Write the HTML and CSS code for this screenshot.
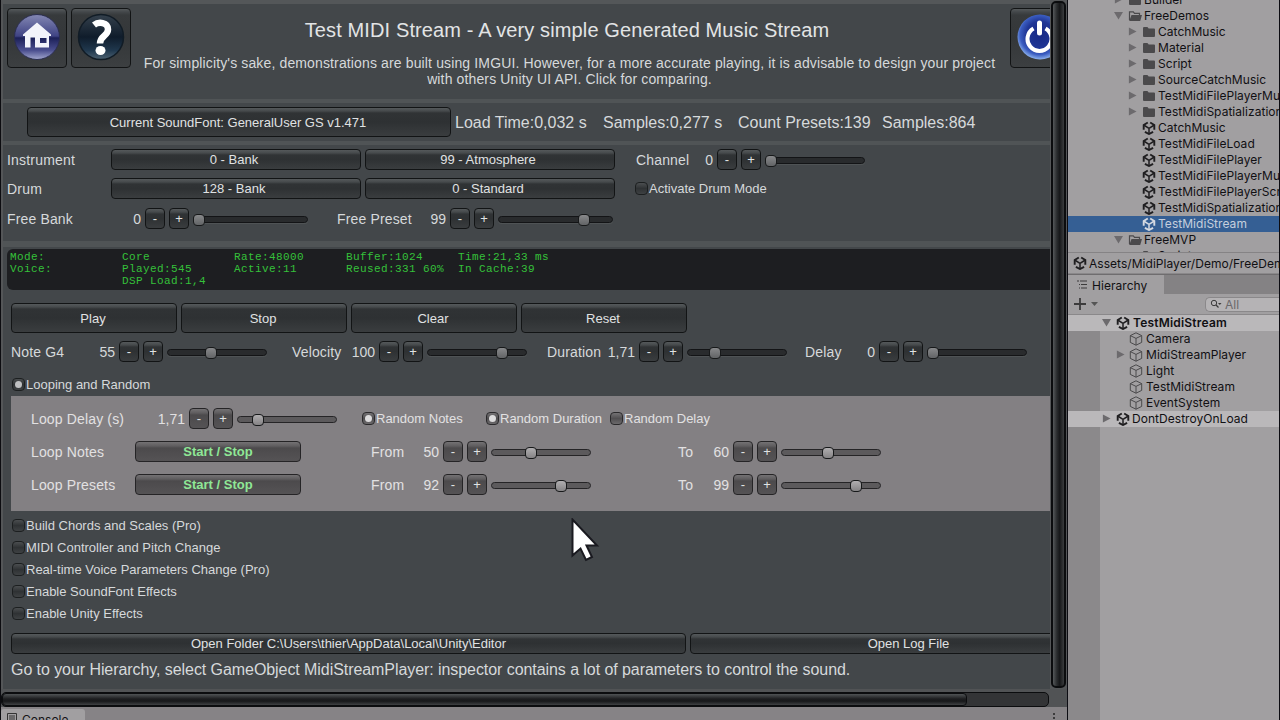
FILE: index.html
```html
<!DOCTYPE html>
<html lang="en">
<head>
  <meta charset="UTF-8">
  <meta name="viewport" content="width=device-width, initial-scale=1.0">
  <title>Test MIDI Stream</title>
  <link rel="stylesheet" href="styles.css">
</head>
<body>
  <svg class="defs">
    <symbol id="unity" viewBox="0 0 14 14">
      <path d="M5.800 1.500 1.700 4v4.700M8.200 1.500 12.300 4v4.700M2.900 10.800 7 13l4.100-2.200" fill="none" stroke="currentColor" stroke-width="1.900"/>
      <path d="M7 7.300V13M7 7.300 1.700 4M7 7.300 12.300 4" fill="none" stroke="currentColor" stroke-width="1.500"/>
    </symbol>
    <symbol id="folder" viewBox="0 0 14 12">
      <path d="M1 2.200Q1 1 2 1h3.400l1.300 1.500H12q1 0 1 1V10q0 1-1 1H2q-1 0-1-1z" fill="currentColor"/>
    </symbol>
    <symbol id="folder-open" viewBox="0 0 14 12">
      <path d="M1.500 10V1.800h3.800l1.200 1.500h5V5" fill="none" stroke="currentColor" stroke-width="1.200"/>
      <path d="M3.500 5H14l-1.800 6H1.200z" fill="currentColor"/>
    </symbol>
    <symbol id="cube" viewBox="0 0 14 14">
      <path d="M7 .8 12.700 3.600v6.800L7 13.200 1.300 10.400V3.600zM1.300 3.600 7 6.400l5.700-2.800M7 6.400v6.800" fill="none" stroke="currentColor" stroke-width="1"/>
    </symbol>
  </svg>

  <div class="editor">
    <div class="game">
      <div class="game-row">
        <div class="viewport">
          <header class="section header">
            <button class="btn icon-btn">
              <svg viewBox="0 0 48 48">
                <defs>
                  <linearGradient id="homeBg" x1="0" y1="0" x2="0" y2="1">
                    <stop offset="0" stop-color="#8488b4"/>
                    <stop offset=".48" stop-color="#3f4384"/>
                    <stop offset=".52" stop-color="#1c2058"/>
                    <stop offset=".8" stop-color="#4c5090"/>
                    <stop offset="1" stop-color="#a3a8cf"/>
                  </linearGradient>
                </defs>
                <circle cx="24" cy="24" r="22.5" fill="url(#homeBg)" stroke="#2b2e50"/>
                <path d="M24 9.500 38 21.500v1.500h-2v11.500H12V23h-2v-1.500zM17.500 24.500v10h4.500v-10zM27 25v5h6.500v-5z" fill="#f2f3fa" fill-rule="evenodd"/>
              </svg>
            </button>
            <button class="btn icon-btn">
              <svg viewBox="0 0 48 48">
                <defs>
                  <linearGradient id="helpBg" x1="0" y1="0" x2="0" y2="1">
                    <stop offset="0" stop-color="#35414d"/>
                    <stop offset=".5" stop-color="#0f1c2b"/>
                    <stop offset=".8" stop-color="#20384e"/>
                    <stop offset="1" stop-color="#4d6272"/>
                  </linearGradient>
                </defs>
                <circle cx="24" cy="24" r="22.500" fill="url(#helpBg)" stroke="#111c26" stroke-width="1.5"/>
                <path d="M17 12C21.500 8.500 31 9 31 16.500c0 6.500-8 6-8 14" fill="none" stroke="#fff" stroke-width="6.500"/>
                <ellipse cx="23.500" cy="37.500" rx="5" ry="4.500" fill="#fff"/>
              </svg>
            </button>
            <div class="title-box">
              <h1>Test MIDI Stream - A very simple Generated Music Stream</h1>
              <p>For simplicity's sake, demonstrations are built using IMGUI. However, for a more accurate playing, it is advisable to design your project<br>with others Unity UI API. Click for comparing.</p>
            </div>
            <button class="btn icon-btn">
              <svg viewBox="0 0 48 48">
                <defs>
                  <radialGradient id="quitBg" cx=".5" cy=".45" r=".55">
                    <stop offset="0" stop-color="#182a86"/>
                    <stop offset=".55" stop-color="#1f3595"/>
                    <stop offset=".8" stop-color="#3a5cc0"/>
                    <stop offset="1" stop-color="#8fb4ee"/>
                  </radialGradient>
                </defs>
                <circle cx="24" cy="24" r="22.500" fill="url(#quitBg)"/>
                <path d="M17.500 15.500a12 12 0 1 0 12 0" fill="none" stroke="#fff" stroke-width="4"/>
                <path d="M23.500 10v10" stroke="#fff" stroke-width="5" stroke-linecap="round"/>
              </svg>
            </button>
          </header>

          <section class="section soundfont">
            <button class="btn">Current SoundFont: GeneralUser GS v1.471</button>
            <span class="stat load">Load Time:0,032 s</span>
            <span class="stat samples">Samples:0,277 s</span>
            <span class="stat presets">Count Presets:139</span>
            <span class="stat">Samples:864</span>
          </section>

          <section class="section instrument">
            <div class="row row-first">
              <span class="label">Instrument</span>
              <button class="btn bank">0 - Bank</button>
              <button class="btn bank">99 - Atmosphere</button>
              <div class="stepper channel">
                <span class="name">Channel</span><span class="value">0</span>
                <button class="btn step">-</button><button class="btn step">+</button>
                <div class="slider"><i style="left:0%"></i></div>
              </div>
            </div>
            <div class="row">
              <span class="label">Drum</span>
              <button class="btn bank">128 - Bank</button>
              <button class="btn bank">0 - Standard</button>
              <label class="toggle drum-mode"><i></i>Activate Drum Mode</label>
            </div>
            <div class="row row-free">
              <div class="stepper free-bank">
                <span class="name">Free Bank</span><span class="value">0</span>
                <button class="btn step">-</button><button class="btn step">+</button>
                <div class="slider wide"><i style="left:0%"></i></div>
              </div>
              <div class="stepper free-preset">
                <span class="name">Free Preset</span><span class="value">99</span>
                <button class="btn step">-</button><button class="btn step">+</button>
                <div class="slider wide"><i style="left:71%"></i></div>
              </div>
            </div>
          </section>

          <pre class="info">Mode:           Core            Rate:48000      Buffer:1024     Time:21,33 ms
Voice:          Played:545      Active:11       Reused:331 60%  In Cache:39
                DSP Load:1,4</pre>

          <section class="player">
            <div class="buttons">
              <button class="btn">Play</button>
              <button class="btn">Stop</button>
              <button class="btn">Clear</button>
              <button class="btn">Reset</button>
            </div>
            <div class="row note-row">
              <div class="stepper note">
                <span class="name">Note G4</span><span class="value">55</span>
                <button class="btn step">-</button><button class="btn step">+</button>
                <div class="slider"><i style="left:39%"></i></div>
              </div>
              <div class="stepper velocity">
                <span class="name">Velocity</span><span class="value">100</span>
                <button class="btn step">-</button><button class="btn step">+</button>
                <div class="slider"><i style="left:70%"></i></div>
              </div>
              <div class="stepper duration">
                <span class="name">Duration</span><span class="value">1,71</span>
                <button class="btn step">-</button><button class="btn step">+</button>
                <div class="slider"><i style="left:22%"></i></div>
              </div>
              <div class="stepper delay">
                <span class="name">Delay</span><span class="value">0</span>
                <button class="btn step">-</button><button class="btn step">+</button>
                <div class="slider"><i style="left:0%"></i></div>
              </div>
            </div>
            <label class="toggle looping on"><i></i>Looping and Random</label>

            <div class="loop-panel">
              <div class="row">
                <div class="stepper loop-delay">
                  <span class="name">Loop Delay (s)</span><span class="value">1,71</span>
                  <button class="btn step">-</button><button class="btn step">+</button>
                  <div class="slider"><i style="left:15%"></i></div>
                </div>
                <label class="toggle rnd on"><i></i>Random Notes</label>
                <label class="toggle rnd on"><i></i>Random Duration</label>
                <label class="toggle rnd"><i></i>Random Delay</label>
              </div>
              <div class="row">
                <span class="label">Loop Notes</span>
                <button class="btn start">Start / Stop</button>
                <div class="stepper from">
                  <span class="name">From</span><span class="value">50</span>
                  <button class="btn step">-</button><button class="btn step">+</button>
                  <div class="slider"><i style="left:35%"></i></div>
                </div>
                <div class="stepper to">
                  <span class="name">To</span><span class="value">60</span>
                  <button class="btn step">-</button><button class="btn step">+</button>
                  <div class="slider"><i style="left:42%"></i></div>
                </div>
              </div>
              <div class="row">
                <span class="label">Loop Presets</span>
                <button class="btn start">Start / Stop</button>
                <div class="stepper from">
                  <span class="name">From</span><span class="value">92</span>
                  <button class="btn step">-</button><button class="btn step">+</button>
                  <div class="slider"><i style="left:65%"></i></div>
                </div>
                <div class="stepper to">
                  <span class="name">To</span><span class="value">99</span>
                  <button class="btn step">-</button><button class="btn step">+</button>
                  <div class="slider"><i style="left:70%"></i></div>
                </div>
              </div>
            </div>

            <div class="options">
              <label class="toggle"><i></i>Build Chords and Scales (Pro)</label>
              <label class="toggle"><i></i>MIDI Controller and Pitch Change</label>
              <label class="toggle"><i></i>Real-time Voice Parameters Change (Pro)</label>
              <label class="toggle"><i></i>Enable SoundFont Effects</label>
              <label class="toggle"><i></i>Enable Unity Effects</label>
            </div>

            <div class="files">
              <button class="btn folder-btn">Open Folder C:\Users\thier\AppData\Local\Unity\Editor</button>
              <button class="btn log-btn">Open Log File</button>
            </div>
            <p class="hint">Go to your Hierarchy, select GameObject MidiStreamPlayer: inspector contains a lot of parameters to control the sound.</p>
          </section>
        </div>
        <div class="vscroll"><div class="vthumb"></div></div>
      </div>
      <div class="hscroll"><div class="hthumb"></div></div>
      <div class="console-bar">
        <div class="console-tab">
          <svg viewBox="0 0 10 10"><path d="M.5.500h9v9h-9zM2 3h6M2 5h6M2 7h6" fill="none" stroke="#333"/></svg>
          Console
        </div>
        <span class="dots"></span>
      </div>
      <svg class="cursor" viewBox="0 0 30 44">
        <path d="M1.500 1.500v36l8-7 5.500 11.500 6-3-5.500-11.500h10.500z" fill="#fff" stroke="#1a1a20" stroke-width="2"/>
      </svg>
    </div>

    <aside class="side">
      <div class="project">
        <div class="item l1"><i class="arrow"></i><svg class="ico"><use href="#folder"/></svg>Builder</div>
        <div class="item l1"><i class="arrow open"></i><svg class="ico"><use href="#folder-open"/></svg>FreeDemos</div>
        <div class="item l2"><i class="arrow"></i><svg class="ico"><use href="#folder"/></svg>CatchMusic</div>
        <div class="item l2"><i class="arrow"></i><svg class="ico"><use href="#folder"/></svg>Material</div>
        <div class="item l2"><i class="arrow"></i><svg class="ico"><use href="#folder"/></svg>Script</div>
        <div class="item l2"><i class="arrow"></i><svg class="ico"><use href="#folder"/></svg>SourceCatchMusic</div>
        <div class="item l2"><i class="arrow"></i><svg class="ico"><use href="#folder"/></svg>TestMidiFilePlayerMulti</div>
        <div class="item l2"><i class="arrow"></i><svg class="ico"><use href="#folder"/></svg>TestMidiSpatialization</div>
        <div class="item l2"><i class="arrow none"></i><svg class="ico scene"><use href="#unity"/></svg>CatchMusic</div>
        <div class="item l2"><i class="arrow none"></i><svg class="ico scene"><use href="#unity"/></svg>TestMidiFileLoad</div>
        <div class="item l2"><i class="arrow none"></i><svg class="ico scene"><use href="#unity"/></svg>TestMidiFilePlayer</div>
        <div class="item l2"><i class="arrow none"></i><svg class="ico scene"><use href="#unity"/></svg>TestMidiFilePlayerMulti</div>
        <div class="item l2"><i class="arrow none"></i><svg class="ico scene"><use href="#unity"/></svg>TestMidiFilePlayerScripting</div>
        <div class="item l2"><i class="arrow none"></i><svg class="ico scene"><use href="#unity"/></svg>TestMidiSpatialization</div>
        <div class="item l2 selected"><i class="arrow none"></i><svg class="ico scene"><use href="#unity"/></svg>TestMidiStream</div>
        <div class="item l1"><i class="arrow open"></i><svg class="ico"><use href="#folder-open"/></svg>FreeMVP</div>
        <div class="item l2"><i class="arrow none"></i><svg class="ico"><use href="#folder"/></svg>Script</div>
      </div>
      <div class="path-bar"><svg class="ico scene"><use href="#unity"/></svg>Assets/MidiPlayer/Demo/FreeDemos</div>
      <div class="tabs">
        <div class="tab">
          <svg viewBox="0 0 12 10"><path d="M1 1h2M4 1h7M3 4.500h1M5 4.500h6M3 8h1M5 8h6" stroke="#3c3b3c" stroke-width="1.1"/></svg>
          Hierarchy
        </div>
      </div>
      <div class="toolbar">
        <svg class="plus" viewBox="0 0 26 14"><path d="M7 1v12M1 7h12" stroke="#3c3b3c" stroke-width="1.800"/><path d="M18 5h7l-3.500 4z" fill="#555"/></svg>
        <div class="search">
          <svg viewBox="0 0 12 10"><circle cx="4" cy="4" r="2.700" fill="none" stroke="#3c3b3c"/><path d="M6 6l2.500 2.500" stroke="#3c3b3c" stroke-width="1.200"/><path d="M8 4h3.500L9.800 6z" fill="#3c3b3c"/></svg>
          All
        </div>
      </div>
      <div class="hierarchy">
        <div class="item head bold"><i class="arrow open"></i><svg class="ico scene"><use href="#unity"/></svg>TestMidiStream</div>
        <div class="item obj"><i class="arrow none"></i><svg class="ico cube"><use href="#cube"/></svg>Camera</div>
        <div class="item obj"><i class="arrow"></i><svg class="ico cube"><use href="#cube"/></svg>MidiStreamPlayer</div>
        <div class="item obj"><i class="arrow none"></i><svg class="ico cube"><use href="#cube"/></svg>Light</div>
        <div class="item obj"><i class="arrow none"></i><svg class="ico cube"><use href="#cube"/></svg>TestMidiStream</div>
        <div class="item obj"><i class="arrow none"></i><svg class="ico cube"><use href="#cube"/></svg>EventSystem</div>
        <div class="item head"><i class="arrow"></i><svg class="ico scene"><use href="#unity"/></svg>DontDestroyOnLoad</div>
      </div>
    </aside>
  </div>
</body>
</html>
```
FILE: styles.css
```css
* {
  box-sizing: border-box;
}
body {
  margin: 0;
  width: 1280px;
  height: 720px;
  overflow: hidden;
  background: #0c0c12;
  font-family: "Liberation Sans", Arial, sans-serif;
  font-size: 14px;
  color: #d6d9db;
}
h1, p, pre {
  margin: 0;
}
.defs {
  display: none;
}
.editor {
  display: flex;
  width: 1279px;
  height: 720px;
}

/* game view */
.game {
  position: relative;
  width: 1067px;
  height: 720px;
  flex: none;
  background: #515355;
  border-left: 1px solid #0c0c10;
}
.game-row {
  display: flex;
  height: 689px;
}
.viewport {
  width: 1049px;
  height: 689px;
  overflow: hidden;
  border-left: 2px solid #545658;
  border-top: 4px solid #545759;
  background: #43474a;
}
.section {
  width: 1120px;
  border-bottom: 4px solid #505456;
}

.btn {
  flex: none;
  padding: 0;
  border: 1px solid #121415;
  border-radius: 4px;
  background: linear-gradient(#55595b 0, #464a4c 3px, #303335 5px, #2e3133 50%, #3a3d3f 100%);
  color: #e0e2e3;
  font-family: inherit;
  font-size: 13px;
  text-align: center;
}
.row {
  display: flex;
  align-items: center;
}

.header {
  display: flex;
  height: 99px;
  padding: 4px 0 0 4px;
}
.icon-btn {
  width: 60px;
  height: 60px;
  margin-right: 4px;
  background: linear-gradient(#55595b 0, #43474a 3px, #373a3c 6px, #343739 50%, #3c3f41 100%);
}
.icon-btn svg {
  display: block;
  width: 48px;
  height: 48px;
  margin: 0 auto 2px;
}
.title-box {
  width: 875px;
  text-align: center;
}
.title-box h1 {
  margin: 10px 11px 0 0;
  font-size: 20px;
  font-weight: normal;
  line-height: 24px;
  letter-spacing: .12px;
  color: #e2e4e5;
}
.title-box p {
  margin: 13px 6px 0 0;
  line-height: 16px;
  letter-spacing: .135px;
  white-space: nowrap;
}

.soundfont {
  display: flex;
  align-items: center;
  height: 42px;
  padding-left: 24px;
}
.soundfont .btn {
  width: 424px;
  height: 30px;
  margin-right: 4px;
  padding-right: 2px;
}
.stat {
  margin-top: 2px;
  font-size: 16px;
  white-space: nowrap;
}
.load {
  width: 148px;
}
.samples {
  width: 135px;
}
.presets {
  width: 144px;
}

.instrument {
  height: 102px;
  padding: 4px 0 0 4px;
  border-bottom-width: 6px;
}
.instrument .row {
  height: 29px;
}
.instrument .row-first {
  height: 21px;
  margin-bottom: 4px;
}
.instrument .row-free {
  height: 31px;
}
.instrument .label {
  width: 104px;
  letter-spacing: .2px;
}
.bank {
  width: 250px;
  height: 21px;
  margin-right: 4px;
  padding-right: 4px;
}

/* label + value + buttons + slider */
.stepper {
  display: flex;
  align-items: center;
  flex: none;
  letter-spacing: .15px;
}
.stepper .value {
  margin-left: auto;
  margin-right: 4px;
  letter-spacing: 0;
}
.step {
  width: 20px;
  height: 21px;
  margin-right: 4px;
}
.slider {
  position: relative;
  flex: none;
  width: 100px;
  height: 7px;
  margin-top: 2px;
  border: 1px solid #131416;
  border-radius: 4px;
  background: #292b2d;
  box-shadow: 0 1px 0 #4f5355;
}
.slider.wide {
  width: 115px;
}
.slider i {
  position: absolute;
  top: -3px;
  width: 12px;
  height: 12px;
  margin-left: -1px;
  border: 1px solid #17191a;
  border-radius: 4px;
  background: linear-gradient(#88898b, #626466);
}
.channel {
  width: 229px;
  margin-left: 17px;
}
.drum-mode {
  margin-left: 16px;
}
.free-bank {
  width: 301px;
  margin-right: 29px;
}
.free-preset {
  width: 276px;
}

.toggle {
  display: flex;
  align-items: center;
  font-size: 13px;
  white-space: nowrap;
}
.toggle i {
  position: relative;
  width: 13px;
  height: 13px;
  margin-right: 1px;
  border: 1px solid #1c1f20;
  border-radius: 4px;
  background: linear-gradient(#4b4e50, #2f3234 50%, #3e4143);
}
.toggle.on i::after {
  content: "";
  position: absolute;
  left: 2px;
  top: 2px;
  width: 7px;
  height: 7px;
  border-radius: 50%;
  background: #bfc0c2;
}

.info {
  width: 1120px;
  height: 41px;
  margin: 2px 0 0 4px;
  padding: 2px 3px;
  border-radius: 6px;
  background: #1d1e21;
  color: #35c13a;
  font-family: "Liberation Mono", "Courier New", monospace;
  font-size: 11px;
  line-height: 12px;
  letter-spacing: .4px;
}

.player {
  padding-left: 8px;
}
.buttons {
  display: flex;
  gap: 4px;
  margin-top: 13px;
}
.buttons .btn {
  width: 166px;
  height: 30px;
  padding-right: 2px;
}
.note-row {
  height: 37px;
}
.note {
  width: 256px;
}
.velocity {
  width: 235px;
  margin-left: 25px;
}
.duration {
  width: 240px;
  margin-left: 20px;
}
.delay {
  width: 222px;
  margin-left: 18px;
}
.looping {
  height: 26px;
  margin-left: 1px;
  padding-top: 2px;
}

.loop-panel {
  width: 1100px;
  height: 115px;
  padding: 6px 0 0 20px;
  background: #838083;
  color: #e2e1e2;
}
.loop-panel .row {
  height: 33px;
}
.loop-panel .label {
  width: 104px;
  letter-spacing: .15px;
}
.loop-panel .btn {
  border-color: #252426;
  background: linear-gradient(#747274 0, #5f5d5f 4px, #4c4a4c 6px, #555355 100%);
}
.loop-panel .slider {
  border-color: #252426;
  background: #5c5a5c;
  box-shadow: none;
}
.loop-panel .slider i {
  background: linear-gradient(#b0aeb0, #858385);
}
.loop-panel .toggle i {
  border-color: #2a292b;
  background: linear-gradient(#747274, #504e50 50%, #6b696b);
}
.loop-panel .toggle.on i::after {
  background: #dddcdd;
}
.loop-delay {
  width: 306px;
  margin-right: 25px;
}
.rnd {
  width: 124px;
}
.loop-panel .start {
  width: 166px;
  height: 21px;
  color: #8fe796;
  font-weight: bold;
}
.from {
  width: 220px;
  margin-left: 70px;
}
.to {
  width: 203px;
  margin-left: 87px;
}

.options {
  padding: 3px 0 0 1px;
}
.options .toggle {
  height: 22px;
}
.files {
  display: flex;
  gap: 4px;
  margin-top: 9px;
}
.files .btn {
  height: 21px;
}
.folder-btn {
  width: 675px;
}
.log-btn {
  width: 437px;
}
.hint {
  width: 900px;
  margin-top: 6px;
  font-size: 16px;
  line-height: 20px;
  letter-spacing: -.068px;
}

.vscroll {
  width: 17px;
  height: 689px;
  padding: 1px 1px 0;
  background: #545658;
}
.vthumb {
  height: 687px;
  border: 2px solid #0b0c0e;
  border-radius: 5px;
  background: linear-gradient(90deg, #55585a, #2a2c2e 35%, #17181a 60%, #3a3c3e);
}
.hscroll {
  width: 1048px;
  height: 15px;
  margin-top: 3px;
  border: 1px solid #0b0c0e;
  border-radius: 5px;
  background: #333436;
}
.hthumb {
  width: 965px;
  height: 13px;
  border: 1px solid #0b0c0e;
  border-radius: 4px;
  background: linear-gradient(#505355, #1d1e20 45%, #17181a 65%, #3f4143);
}
.console-bar {
  display: flex;
  justify-content: space-between;
  height: 13px;
  padding-top: 2px;
  overflow: hidden;
  background: #868386;
}
.console-tab {
  display: flex;
  align-items: flex-start;
  width: 84px;
  height: 20px;
  padding: 3px 0 0 6px;
  border-radius: 3px 3px 0 0;
  background: #a19fa1;
  color: #151416;
  font: 12px/15px Inter, sans-serif;
}
.console-tab svg {
  width: 10px;
  height: 10px;
  margin: 1px 5px 0 0;
}
.dots {
  width: 2px;
  height: 2px;
  margin: 4px 12px 0 0;
  background: #3c3b3c;
  box-shadow: 0 4px #3c3b3c;
}
.cursor {
  position: absolute;
  left: 570px;
  top: 518px;
  width: 30px;
  height: 44px;
}

/* project and hierarchy panels */
.side {
  width: 211px;
  height: 720px;
  margin-left: 1px;
  overflow: hidden;
  background: #a19fa1;
  color: #111013;
  font-family: Inter, "Open Sans", sans-serif;
  font-size: 12px;
  letter-spacing: .04px;
}
.project {
  height: 252px;
  overflow: hidden;
}
.project .item:first-child {
  margin-top: -8px;
}
.item {
  display: flex;
  align-items: center;
  height: 16px;
  line-height: 15px;
  padding-bottom: 1px;
  white-space: nowrap;
}
.l1 {
  padding-left: 46px;
}
.l2 {
  padding-left: 60px;
}
.ico {
  flex: none;
  width: 14px;
  height: 12px;
  margin-right: 2px;
  color: #4b4a4c;
}
.ico.scene {
  height: 14px;
  color: #1f1e20;
}
.ico.cube {
  height: 14px;
}
.arrow {
  flex: none;
  width: 9px;
  height: 9px;
  margin-right: 5px;
  background: #6c6a6d;
  clip-path: polygon(10% 5%, 95% 50%, 10% 95%);
}
.arrow.open {
  clip-path: polygon(0 10%, 100% 10%, 50% 95%);
}
.arrow.none {
  visibility: hidden;
}
.selected {
  background: #355f94;
  color: #c5cfdd;
}
.selected .ico {
  color: #d5dae2;
}
.path-bar {
  display: flex;
  align-items: center;
  height: 22px;
  padding-left: 5px;
  border-top: 1px solid #858385;
  border-bottom: 1px solid #8a888a;
  white-space: nowrap;
}
.tabs {
  height: 20px;
  border-top: 1px solid #6f6d6f;
  background: #848284;
}
.tab {
  display: flex;
  align-items: center;
  width: 96px;
  height: 20px;
  padding-left: 8px;
  background: #a19fa1;
}
.tab svg {
  width: 12px;
  height: 10px;
  margin-right: 4px;
}
.toolbar {
  display: flex;
  align-items: center;
  justify-content: space-between;
  height: 20px;
}
.plus {
  width: 26px;
  height: 14px;
  margin-left: 5px;
}
.search {
  display: flex;
  align-items: center;
  width: 74px;
  height: 15px;
  padding-left: 4px;
  border: 1px solid #8a888a;
  border-right: none;
  border-radius: 5px 0 0 5px;
  background: #b5b3b5;
  color: #6a686b;
}
.search svg {
  width: 12px;
  height: 10px;
  margin-right: 3px;
}
.hierarchy {
  height: 406px;
  border-top: 1px solid #8a888a;
  background: linear-gradient(90deg, #8b898b 32px, #a19fa1 32px);
}
.head {
  padding-left: 34px;
  background: #bab8ba;
}
.head .ico {
  margin-right: 2px;
}
.bold {
  font-weight: 600;
  letter-spacing: .2px;
}
.bold .ico {
  margin-right: 3px;
}
.obj {
  padding-left: 48px;
}
.obj .ico {
  margin-right: 3px;
}
.obj .arrow {
  margin-right: 4px;
}
```
